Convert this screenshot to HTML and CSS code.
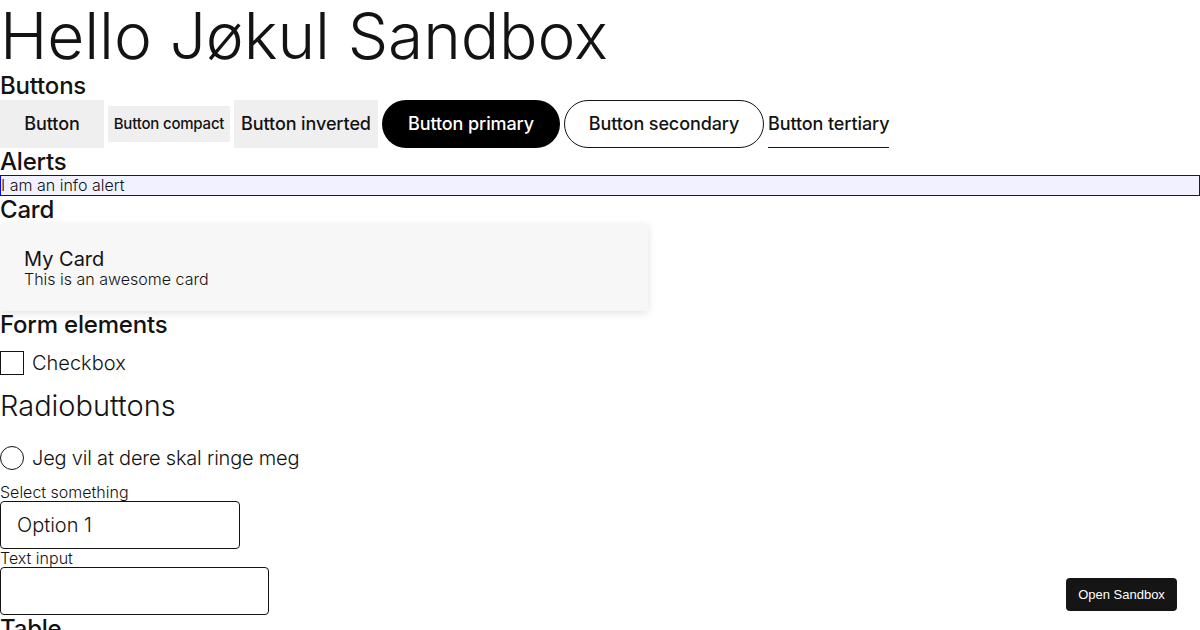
FILE: index.html
```html
<!DOCTYPE html>
<html lang="no">
<head>
<meta charset="utf-8">
<title>Hello Jøkul Sandbox</title>
<link rel="stylesheet" href="styles.css">
</head>
<body>
<main class="page">
  <h1 class="title">Hello Jøkul Sandbox</h1>

  <h2 class="section">Buttons</h2>
  <div class="buttons">
    <button class="btn btn-plain">Button</button>
    <button class="btn btn-compact">Button compact</button>
    <button class="btn btn-inverted">Button inverted</button>
    <button class="btn btn-primary">Button primary</button>
    <button class="btn btn-secondary">Button secondary</button>
    <button class="btn btn-tertiary">Button tertiary</button>
  </div>

  <h2 class="section">Alerts</h2>
  <div class="alert">I am an info alert</div>

  <h2 class="section">Card</h2>
  <div class="card">
    <div class="card-title">My Card</div>
    <div class="card-text">This is an awesome card</div>
  </div>

  <h2 class="section">Form elements</h2>
  <label class="check-row">
    <span class="checkbox"></span>
    <span class="check-label">Checkbox</span>
  </label>

  <div class="radio-group">
    <div class="radio-legend">Radiobuttons</div>
    <label class="radio-row">
      <span class="radio"></span>
      <span class="radio-label">Jeg vil at dere skal ringe meg</span>
    </label>
  </div>

  <div class="field">
    <div class="field-label">Select something</div>
    <div class="select">Option 1</div>
  </div>

  <div class="field">
    <div class="field-label">Text input</div>
    <div class="text-input"></div>
  </div>

  <h2 class="section">Table</h2>
</main>
<button class="sandbox-btn">Open Sandbox</button>
</body>
</html>
```

FILE: styles.css
```css
* { box-sizing: border-box; }

html, body {
  margin: 0;
  padding: 0;
  background: #ffffff;
  color: #131313;
  font-family: "Inter", "Liberation Sans", sans-serif;
  overflow: hidden;
}

.page {
  display: flex;
  flex-direction: column;
  align-items: flex-start;
}

.title {
  margin: 0;
  font-size: 64px;
  line-height: 72px;
  font-weight: 300;
  letter-spacing: -0.1px;
}

.section {
  margin: 0;
  font-size: 24px;
  line-height: 28px;
  font-weight: 500;
  letter-spacing: -0.2px;
}

.buttons {
  display: flex;
  align-items: center;
  gap: 4px;
}

.btn {
  font-family: inherit;
  color: #131313;
  border: none;
  background: none;
  margin: 0;
  padding: 0;
  font-size: 18px;
  font-weight: 500;
  letter-spacing: -0.1px;
  white-space: nowrap;
  line-height: 22px;
  cursor: pointer;
}

.btn-plain {
  height: 48px;
  width: 104px;
  background: #efefef;
}

.btn-compact {
  height: 36px;
  width: 122px;
  font-size: 15px;
  letter-spacing: -0.2px;
  background: #efefef;
}

.btn-inverted {
  height: 48px;
  width: 144px;
  background: #efefef;
}

.btn-primary {
  height: 48px;
  width: 178px;
  background: #000;
  color: #fff;
  border-radius: 24px;
}

.btn-secondary {
  height: 48px;
  width: 200px;
  border: 1px solid #131313;
  border-radius: 24px;
  background: #fff;
}

.btn-tertiary {
  height: 48px;
  width: 121px;
  text-align: left;
  border-bottom: 1px solid #131313;
}

.alert {
  align-self: stretch;
  margin-top: -1px;
  border: 1px solid #0000ff;
  background: #f1f1ff;
  font-size: 16px;
  line-height: 19px;
  font-weight: 300;
}

.card {
  width: 648px;
  background: #f7f7f7;
  padding: 24px 24px 23px;
  box-shadow: 0 2px 8px rgba(0, 0, 0, 0.12);
}

.card-title {
  font-size: 20px;
  line-height: 22px;
  font-weight: 400;
}

.card-text {
  font-size: 16px;
  line-height: 18px;
  font-weight: 300;
}

.check-row {
  display: flex;
  align-items: center;
  gap: 8px;
  margin-top: 12px;
}

.checkbox {
  width: 24px;
  height: 24px;
  border: 1px solid #131313;
}

.check-label {
  font-size: 20px;
  line-height: 24px;
  font-weight: 300;
}

.radio-group {
  display: flex;
  flex-direction: column;
  margin-top: 14px;
}

.radio-legend {
  font-size: 29px;
  line-height: 34px;
  font-weight: 300;
}

.radio-row {
  display: flex;
  align-items: center;
  gap: 8px;
  margin-top: 23px;
}

.radio {
  width: 24px;
  height: 24px;
  border: 1px solid #131313;
  border-radius: 50%;
}

.radio-label {
  font-size: 20px;
  line-height: 24px;
  font-weight: 300;
  letter-spacing: -0.2px;
}

.field {
  display: flex;
  flex-direction: column;
}

.radio-group + .field { margin-top: 13px; }

.field-label {
  font-size: 16px;
  line-height: 18px;
  font-weight: 300;
}

.select {
  width: 240px;
  height: 48px;
  border: 1px solid #131313;
  border-radius: 4px;
  padding: 0 16px;
  font-size: 20px;
  line-height: 46px;
  font-weight: 300;
}

.text-input {
  width: 269px;
  height: 48px;
  border: 1px solid #131313;
  border-radius: 4px;
}

.sandbox-btn {
  position: fixed;
  right: 23px;
  bottom: 19px;
  width: 111px;
  height: 33px;
  background: #151515;
  color: #fff;
  border: none;
  border-radius: 4px;
  font-family: "Liberation Sans", sans-serif;
  font-size: 13px;
  padding: 0;
}
```
